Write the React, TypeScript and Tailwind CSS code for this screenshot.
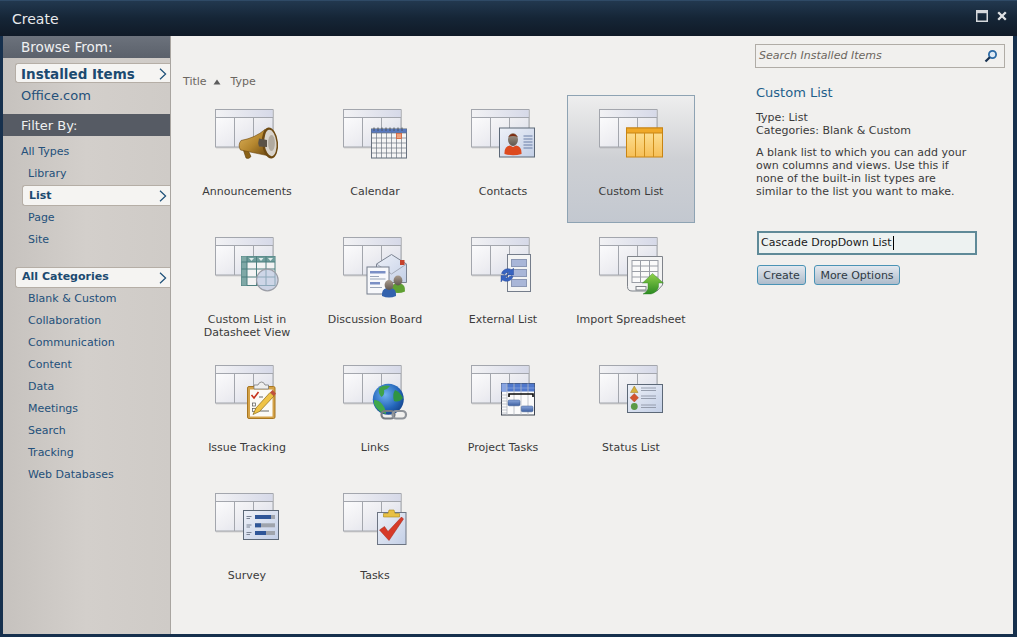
import React from "react";

const FONT = "font-['DejaVu_Sans',Verdana,sans-serif]";

function Table() {
  return (
    <g>
      <rect x="1" y="1" width="58" height="38.5" fill="#9a9a9a" opacity="0.35" />
      <rect x="0.5" y="0.5" width="57.5" height="37.5" fill="url(#tb)" stroke="#a3a6ad" strokeWidth="1" />
      <rect x="1" y="1" width="56.5" height="7.5" fill="url(#th)" />
      <line x1="0.5" y1="8.5" x2="58" y2="8.5" stroke="#a3a6ad" />
      <line x1="19.5" y1="8.5" x2="19.5" y2="38" stroke="#a3a6ad" />
      <line x1="38.5" y1="8.5" x2="38.5" y2="38" stroke="#a3a6ad" />
    </g>
  );
}

function Defs() {
  return (
    <svg width="0" height="0" className="absolute">
      <defs>
        <linearGradient id="tb" x1="0" y1="0" x2="1" y2="1">
          <stop offset="0" stopColor="#ffffff" />
          <stop offset="0.5" stopColor="#eeeef2" />
          <stop offset="1" stopColor="#d5d9e8" />
        </linearGradient>
        <linearGradient id="th" x1="0" y1="0" x2="1" y2="0">
          <stop offset="0" stopColor="#f2f2f4" />
          <stop offset="1" stopColor="#d6d9e8" />
        </linearGradient>
        <linearGradient id="brass" x1="0" y1="0" x2="1" y2="1">
          <stop offset="0" stopColor="#e0b45c" />
          <stop offset="0.55" stopColor="#b4862e" />
          <stop offset="1" stopColor="#6e4a12" />
        </linearGradient>
        <linearGradient id="orange" x1="0" y1="0" x2="0" y2="1">
          <stop offset="0" stopColor="#fde49a" />
          <stop offset="1" stopColor="#f7bf57" />
        </linearGradient>
        <linearGradient id="card" x1="0" y1="0" x2="1" y2="1">
          <stop offset="0" stopColor="#eef1f8" />
          <stop offset="1" stopColor="#c3cfe6" />
        </linearGradient>
        <radialGradient id="globe" cx="0.4" cy="0.35" r="0.75">
          <stop offset="0" stopColor="#6fb0ef" />
          <stop offset="0.6" stopColor="#2466bb" />
          <stop offset="1" stopColor="#123d80" />
        </radialGradient>
        <linearGradient id="green" x1="0" y1="0" x2="0" y2="1">
          <stop offset="0" stopColor="#8fd14a" />
          <stop offset="1" stopColor="#2c8a22" />
        </linearGradient>
        <linearGradient id="bluebar" x1="0" y1="0" x2="0" y2="1">
          <stop offset="0" stopColor="#8aa6dc" />
          <stop offset="1" stopColor="#3c5f9f" />
        </linearGradient>
        <linearGradient id="head" x1="0" y1="0" x2="0" y2="1">
          <stop offset="0" stopColor="#a89a8c" />
          <stop offset="1" stopColor="#5f574f" />
        </linearGradient>
      </defs>
    </svg>
  );
}

const Megaphone = () => (
  <g>
    <path d="M28 40 L32 39 L36 47.5 Q34 50.5 31 49 Z" fill="#8a6116" stroke="#5e400c" strokeWidth="0.6" />
    <path d="M26 31.5 Q22.5 36 25.5 41 L52 46.5 L50 20.5 Q40 29 26 31.5 Z" fill="url(#brass)" stroke="#6e4a12" strokeWidth="0.6" />
    <ellipse cx="55" cy="34" rx="8" ry="15.5" transform="rotate(-6 55 34)" fill="#6e4a12" />
    <ellipse cx="55.5" cy="34" rx="6" ry="13.2" transform="rotate(-6 55.5 34)" fill="#d9d4cc" />
    <ellipse cx="56.5" cy="34" rx="3.4" ry="8" fill="#b1aa9f" />
    <path d="M52 31 L44 29.5 Q42.5 33.5 44 37.5 L52 38 Z" fill="#5a5247" />
  </g>
);

const CalendarO = () => {
  const xs = [0, 1, 2, 3, 4, 5, 6, 7];
  const ys = [0, 1, 2, 3, 4];
  return (
    <g>
      <rect x="28.5" y="20" width="35" height="29" fill="#f5f5f5" stroke="#5c6877" strokeWidth="1" />
      <rect x="28.5" y="20" width="35" height="4" fill="#5878bd" />
      {xs.map((i) => (
        <line key={i} x1={28.5 + i * 5} y1="24" x2={28.5 + i * 5} y2="49" stroke="#6d7683" strokeWidth="0.7" />
      ))}
      {ys.map((i) => (
        <line key={i} x1="28.5" y1={24 + i * 5} x2="63.5" y2={24 + i * 5} stroke="#6d7683" strokeWidth="0.7" />
      ))}
      <rect x="53.5" y="24.5" width="5" height="5" fill="#f0a27c" stroke="#d9633a" strokeWidth="0.8" />
      {[31, 35, 39, 43, 47, 51, 55, 59].map((x) => (
        <line key={x} x1={x} y1="18.5" x2={x} y2="22" stroke="#4a5564" strokeWidth="1" />
      ))}
    </g>
  );
};

const ContactCard = () => (
  <g>
    <rect x="28.5" y="19" width="35" height="29" fill="url(#card)" stroke="#5c6877" />
    <path d="M33.5 45 Q33 37.5 39 36.5 L42 38 L45 36.5 Q51 37.5 50.5 45 Q42 47.5 33.5 45 Z" fill="#dd4a1f" />
    <ellipse cx="42" cy="30.5" rx="5" ry="6.5" fill="url(#head)" />
    <path d="M37 28 Q42 21.5 47 28 Q42 26 37 28 Z" fill="#7d2d12" />
    {[27, 30, 33, 36, 39].map((y) => (
      <line key={y} x1="52.5" y1={y} x2="61.5" y2={y} stroke="#6a7ea6" strokeWidth="1" />
    ))}
  </g>
);

const OrangeList = () => (
  <g>
    <rect x="27.5" y="19" width="36" height="29" fill="url(#orange)" stroke="#c88412" />
    <rect x="27.5" y="19" width="36" height="5" fill="#f0a928" stroke="#c88412" />
    {[36.5, 45.5, 54.5].map((x) => (
      <line key={x} x1={x} y1="24" x2={x} y2="48" stroke="#cf8f1c" />
    ))}
  </g>
);

const Datasheet = () => (
  <g>
    <rect x="26.5" y="19.5" width="33.5" height="29" fill="#f3f3f3" stroke="#4d7f7f" />
    <rect x="26.5" y="19.5" width="33.5" height="5.5" fill="#6f9d9c" />
    <rect x="26.5" y="19.5" width="5.5" height="29" fill="#7fa8a6" />
    {[32, 41.5, 51].map((x) => (
      <line key={x} x1={x} y1="19.5" x2={x} y2="48.5" stroke="#4d7f7f" />
    ))}
    {[25, 32, 40].map((y) => (
      <line key={y} x1="26.5" y1={y} x2="60" y2={y} stroke="#4d7f7f" />
    ))}
    {[36.5, 46, 55.5].map((x) => (
      <path key={x} d={`M${x - 2.5} 21 h5 l-2.5 3 Z`} fill="#dfeceb" />
    ))}
    <circle cx="52.3" cy="43" r="10.8" fill="#b7c4de" fillOpacity="0.62" stroke="#9c9ea6" strokeWidth="1.2" />
  </g>
);

const Person = ({ x, y, body }: { x: number; y: number; body: string }) => (
  <g>
    <path d={`M${x - 7} ${y + 11} Q${x - 7.5} ${y + 4} ${x - 2.5} ${y + 3} L${x + 2.5} ${y + 3} Q${x + 7.5} ${y + 4} ${x + 7} ${y + 11} Q${x} ${y + 14} ${x - 7} ${y + 11} Z`} fill={body} />
    <ellipse cx={x} cy={y} rx="4.4" ry="5" fill="url(#head)" />
  </g>
);

const Discussion = () => (
  <g>
    <path d="M33.5 27 L48.5 17.5 L63.5 27 V45.5 H33.5 Z" fill="url(#card)" stroke="#7a8290" />
    <path d="M33.5 27 L48.5 37 L63.5 27" fill="none" stroke="#a4aab8" />
    <rect x="57" y="23" width="4.5" height="5" fill="#c5412a" />
    <rect x="24" y="30" width="22" height="27" fill="#f7f8fb" stroke="#757d8b" />
    <rect x="27" y="34" width="15.5" height="2.5" fill="#7a8fc5" />
    <rect x="27" y="39" width="9" height="1" fill="#9aa5b8" />
    <rect x="27" y="41.5" width="15.5" height="1" fill="#9aa5b8" />
    <rect x="27" y="45" width="10" height="2.5" fill="#7a8fc5" />
    <rect x="27" y="50" width="12" height="1" fill="#9aa5b8" />
    <Person x={55} y={43.5} body="#5fa032" />
    <Person x={46} y={48} body="#3362ad" />
  </g>
);

const External = () => (
  <g>
    <rect x="36.5" y="17.5" width="23" height="37" fill="#f4f4f4" stroke="#757d8b" />
    {[22.5, 32.5, 42.5].map((y) => (
      <rect key={y} x="40.5" y={y} width="15" height="7" fill="#a9b6d8" stroke="#8b97b4" />
    ))}
    <path d="M30.5 36.5 A6.8 6.8 0 0 1 41 33 L42.5 31 V38 H35.5 L38 35.7 A3.4 3.4 0 0 0 33.8 37.5 Z" fill="#3763c0" stroke="#1f3f8f" strokeWidth="0.4" />
    <path d="M42 39.5 A6.8 6.8 0 0 1 31.5 43 L30 45 V38.5 H37 L34.5 40.8 A3.4 3.4 0 0 0 38.7 39 Z" fill="#3763c0" stroke="#1f3f8f" strokeWidth="0.4" />
  </g>
);

const ImportSheet = () => (
  <g>
    <path d="M28.5 19.5 H63.5 V48 L58 54 H33 Q28.5 54 28.5 49.5 Z" fill="#f3f3f3" stroke="#7f838a" />
    <rect x="33" y="23.5" width="26" height="22" fill="#fafafa" stroke="#9a9ea6" />
    {[41.5, 50.5].map((x) => (
      <line key={x} x1={x} y1="23.5" x2={x} y2="45.5" stroke="#9a9ea6" />
    ))}
    {[29, 34.5, 40].map((y) => (
      <line key={y} x1="33" y1={y} x2="59" y2={y} stroke="#9a9ea6" />
    ))}
    <rect x="37" y="49.5" width="10" height="3.5" fill="#fafafa" stroke="#7f838a" />
    <path d="M53.5 36.5 L64.5 46 H59.5 V50 Q58 55.5 52 57 H44 Q49.5 54.5 49 49 V46 H43.5 Z" fill="url(#green)" stroke="#2c7f20" strokeWidth="0.4" />
  </g>
);

const Clipboard = () => (
  <g>
    <rect x="32.5" y="21.5" width="27.5" height="32" rx="1.5" fill="#d4a248" stroke="#a87620" />
    <rect x="35" y="24.5" width="22.5" height="27" fill="#fbfaf6" />
    <path d="M39 22.5 V20 H43 Q44 17 46.5 17 Q49 17 50 20 H53.5 V24 H39 Z" fill="#eeeeee" stroke="#6c6c6c" strokeWidth="0.7" />
    <path d="M36.5 30 L39 33 L43.5 27" fill="none" stroke="#c5301a" strokeWidth="1.6" />
    <line x1="44" y1="32" x2="48" y2="32" stroke="#444" strokeWidth="0.8" />
    <rect x="37.5" y="38" width="3" height="3" fill="none" stroke="#555" strokeWidth="0.7" />
    <rect x="37.5" y="43.5" width="3" height="3" fill="none" stroke="#555" strokeWidth="0.7" />
    <line x1="44" y1="46" x2="54" y2="46" stroke="#444" strokeWidth="0.8" />
    <path d="M38 49.5 L41 43 L55 27.5 L59 31 L44.5 46.5 Z" fill="#efc346" stroke="#8a6a16" strokeWidth="0.7" />
    <path d="M55 27.5 L57.5 25 L61 28.5 L59 31 Z" fill="#c0503c" />
  </g>
);

const Globe = () => (
  <g>
    <circle cx="45.3" cy="34.3" r="15.5" fill="url(#globe)" />
    <path d="M36 23 Q41 19.5 47 21 Q45 24 41 25 Q42 30 38.5 32 Q35 29 36 23 Z" fill="#3fa24a" />
    <path d="M31 35 Q36 35 39 39 Q43 44 43 49 Q35 47 31 39 Z" fill="#41a84c" />
    <path d="M52 25 Q57 27 60 33 Q56 38 51 36 Q49 30 52 25 Z" fill="#2f9444" />
    <rect x="38.5" y="46" width="13" height="7.5" rx="3.7" fill="none" stroke="#767b82" strokeWidth="2.2" />
    <rect x="49.5" y="46" width="13.5" height="7.5" rx="3.7" fill="none" stroke="#8f949a" strokeWidth="2.2" />
  </g>
);

const Gantt = () => (
  <g>
    <rect x="30.5" y="18.5" width="33" height="31.5" fill="#fbfbfb" stroke="#3f4652" />
    <rect x="30.5" y="18.5" width="33" height="8" fill="#5078cc" />
    <rect x="30.5" y="18.5" width="5.5" height="8" fill="#88a4e2" />
    <line x1="36" y1="23" x2="63.5" y2="23" stroke="#7b9ade" />
    {[36, 43, 50, 57].map((x) => (
      <line key={x} x1={x} y1="18.5" x2={x} y2="50" stroke="#b6bac2" strokeWidth="0.8" />
    ))}
    {[30, 33, 36, 39, 42, 45, 48].map((y) => (
      <line key={y} x1="30.5" y1={y} x2="36" y2={y} stroke="#aeb3bc" strokeWidth="0.7" />
    ))}
    <path d="M38 32 V29 H62 V32" fill="none" stroke="#0a0a0a" strokeWidth="1.6" />
    <rect x="37" y="35" width="12" height="5.8" rx="1.4" fill="url(#bluebar)" stroke="#38588f" strokeWidth="0.5" />
    <rect x="50.3" y="41" width="11.7" height="5.8" rx="1.4" fill="url(#bluebar)" stroke="#38588f" strokeWidth="0.5" />
  </g>
);

const Status = () => (
  <g>
    <rect x="28.5" y="19.5" width="35" height="28" fill="url(#card)" stroke="#5c6877" />
    <path d="M35.3 21 L39 27.5 H31.5 Z" fill="#d6b03a" stroke="#9a7b1c" strokeWidth="0.5" />
    <path d="M35.3 28.5 L39.5 32.7 L35.3 37 L31 32.7 Z" fill="#d2532f" stroke="#a33a1c" strokeWidth="0.4" />
    <circle cx="35.3" cy="41.5" r="3.4" fill="#5a9a46" />
    {[23, 25.5, 31, 33.5, 40, 42.5].map((y) => (
      <line key={y} x1="42" y1={y} x2="57" y2={y} stroke="#8f96a6" strokeWidth="0.9" />
    ))}
  </g>
);

const SurveyIcon = () => (
  <g>
    <rect x="28.5" y="17.5" width="35" height="29" fill="url(#card)" stroke="#5c6877" />
    {[23.5, 32, 39.5].map((y) => (
      <g key={y}>
        <line x1="31.5" y1={y} x2="36.5" y2={y} stroke="#7b8494" />
        <line x1="31.5" y1={y + 2} x2="35" y2={y + 2} stroke="#7b8494" />
      </g>
    ))}
    <rect x="40" y="22" width="20" height="4" fill="#9fa4ac" />
    <rect x="40" y="22" width="16" height="4" fill="#2f5698" />
    <rect x="40" y="30.3" width="20" height="4" fill="#9fa4ac" />
    <rect x="40" y="30.3" width="6" height="4" fill="#2f5698" />
    <rect x="40" y="38" width="20" height="4" fill="#9fa4ac" />
    <rect x="40" y="38" width="11" height="4" fill="#2f5698" />
  </g>
);

const TasksIcon = () => (
  <g>
    <rect x="34.5" y="19.5" width="28.5" height="32" fill="url(#card)" stroke="#6c7482" />
    <path d="M40.5 24 V20.5 H45 L46 17 H51 L52 20.5 H56.5 V24 Z" fill="#e8c044" stroke="#a88618" strokeWidth="0.6" />
    <path d="M36.5 37 L41.5 33.5 L45 38.5 L58.5 24 L60.5 26 L46 47.5 Z" fill="#d63a28" stroke="#a02416" strokeWidth="0.5" />
  </g>
);

const ITEMS: { t: string[]; icon: React.ReactNode; sel?: boolean }[] = [
  { t: ["Announcements"], icon: <Megaphone /> },
  { t: ["Calendar"], icon: <CalendarO /> },
  { t: ["Contacts"], icon: <ContactCard /> },
  { t: ["Custom List"], icon: <OrangeList />, sel: true },
  { t: ["Custom List in", "Datasheet View"], icon: <Datasheet /> },
  { t: ["Discussion Board"], icon: <Discussion /> },
  { t: ["External List"], icon: <External /> },
  { t: ["Import Spreadsheet"], icon: <ImportSheet /> },
  { t: ["Issue Tracking"], icon: <Clipboard /> },
  { t: ["Links"], icon: <Globe /> },
  { t: ["Project Tasks"], icon: <Gantt /> },
  { t: ["Status List"], icon: <Status /> },
  { t: ["Survey"], icon: <SurveyIcon /> },
  { t: ["Tasks"], icon: <TasksIcon /> },
];

function Tile({ t, icon, sel }: { t: string[]; icon: React.ReactNode; sel?: boolean }) {
  return (
    <div
      className={
        "flex h-[128px] flex-col items-center border pt-[13px] " +
        (sel
          ? "border-[#8ea3b3] bg-gradient-to-b from-[#eeeeee] via-[#ced0d4] to-[#c3c8d0]"
          : "border-transparent")
      }
    >
      <svg width="70" height="64" viewBox="0 0 70 64" className="ml-[6px] shrink-0">
        <Table />
        {icon}
      </svg>
      <div className="mt-[12px] text-center text-[11px] leading-[13px] text-[#3b3b3b]">
        {t.map((l) => (
          <div key={l}>{l}</div>
        ))}
      </div>
    </div>
  );
}

const Chevron = () => (
  <svg width="8" height="12" viewBox="0 0 8 12" className="shrink-0">
    <path d="M1 0.8 L6.6 6 L1 11.2" fill="none" stroke="#1c4f78" strokeWidth="1.2" />
  </svg>
);

function Pill({ label, indent, h, size }: { label: string; indent: string; h: string; size: string }) {
  return (
    <div className={`flex items-center justify-between rounded-l-[3px] border-y border-l border-[#b5aea6] bg-[#f5f4f2] pr-[3px] ${indent} ${h} ${size}`}>
      <span className="font-bold text-[#1c4a70]">{label}</span>
      <Chevron />
    </div>
  );
}

const SideLink = ({ children, cls }: { children: React.ReactNode; cls: string }) => (
  <div className={`flex h-[22px] items-center text-[11px] text-[#24507a] ${cls}`}>{children}</div>
);

export default function App() {
  return (
    <div className={`flex h-[637px] w-[1017px] flex-col overflow-hidden bg-[#16304d] pb-[3px] pl-[3px] pr-[4px] ${FONT}`}>
      <Defs />
      <div className="-ml-[3px] -mr-[4px] flex h-[36px] shrink-0 items-center justify-between border-t border-[#2f4a66] bg-gradient-to-b from-[#22384f] via-[#152536] to-[#101a27] pl-[12px] pr-[10px]">
        <span className="pt-[2px] text-[14px] text-[#e8eaec]">Create</span>
        <div className="mb-[6px] flex items-center gap-[9px]">
          <svg width="12" height="12" viewBox="0 0 12 12">
            <rect x="0.75" y="0.75" width="10.5" height="10.5" fill="none" stroke="#d5d8dc" strokeWidth="1.5" />
            <rect x="1" y="1" width="10" height="2.2" fill="#d5d8dc" />
          </svg>
          <svg width="10" height="10" viewBox="0 0 10 10">
            <path d="M1.2 1.2 L8.8 8.8 M8.8 1.2 L1.2 8.8" stroke="#e0e2e5" strokeWidth="2.3" />
          </svg>
        </div>
      </div>
      <div className="flex min-h-0 flex-1">
        <aside className="w-[168px] shrink-0 border-r border-[#a9a5a0] bg-gradient-to-r from-[#c6c2be] via-[#d3cfcb] to-[#cfcbc7]">
          <div className="flex h-[22px] items-center bg-gradient-to-b from-[#6c727c] to-[#5b616b] pl-[18px] text-[13.5px] text-[#eff0f1]">Browse From:</div>
          <div className="mt-[5px] pl-[12px]">
            <Pill label="Installed Items" indent="pl-[5px] pt-[2px]" h="h-[20px]" size="text-[13.5px]" />
          </div>
          <div className="flex h-[24px] items-center pl-[18px] pt-[2px] text-[13px] text-[#24507a]">Office.com</div>
          <div className="mt-[7px] flex h-[22px] items-center bg-[#565b64] pl-[18px] pt-[2px] text-[13px] text-[#eff0f1]">Filter By:</div>
          <div className="mt-[4px]">
            <SideLink cls="pl-[18px] pt-[2px]">All Types</SideLink>
            <SideLink cls="pl-[25px] pt-[2px]">Library</SideLink>
            <div className="mt-[1px] pl-[19px]">
              <Pill label="List" indent="pl-[6px] pt-[1px]" h="h-[21px]" size="text-[11px]" />
            </div>
            <SideLink cls="pl-[25px] pt-[2px]">Page</SideLink>
            <SideLink cls="pl-[25px] pt-[2px]">Site</SideLink>
          </div>
          <div className="mt-[17px] pl-[12px]">
            <Pill label="All Categories" indent="pl-[6px]" h="h-[21px]" size="text-[11px]" />
          </div>
          <div>
            {["Blank & Custom", "Collaboration", "Communication", "Content", "Data", "Meetings", "Search", "Tracking", "Web Databases"].map((c) => (
              <SideLink key={c} cls="pl-[25px]">{c}</SideLink>
            ))}
          </div>
        </aside>
        <main className="flex min-w-0 flex-1 bg-[#f1f0ee]">
          <div className="w-[524px] shrink-0 pl-[12px]">
            <div className="flex h-[59px] items-end gap-[6px] pb-[5px] text-[11px] text-[#6b6660]">
              <span>Title</span>
              <svg width="8" height="6" viewBox="0 0 8 6" className="mb-[5px]">
                <path d="M0.5 5.5 L4 0.5 L7.5 5.5 Z" fill="#5c5c5c" />
              </svg>
              <span className="ml-[4px]">Type</span>
            </div>
            <div className="grid w-[512px] grid-cols-4">
              {ITEMS.map((i) => (
                <Tile key={i.t.join()} {...i} />
              ))}
            </div>
          </div>
          <div className="flex-1 pl-[60px] pr-[8px] pt-[8px]">
            <div className="flex h-[24px] items-center justify-between border border-[#b0aca6] pl-[3px] pr-[6px]">
              <span className="text-[11px] italic text-[#6b6660]">Search Installed Items</span>
              <svg width="14" height="14" viewBox="0 0 14 14">
                <circle cx="8.5" cy="5.5" r="3.6" fill="#dfeaf5" stroke="#2c6aa5" strokeWidth="1.8" />
                <line x1="5.8" y1="8.2" x2="1.5" y2="12.5" stroke="#17304f" strokeWidth="2.2" />
              </svg>
            </div>
            <div className="mt-[17px] pl-[1px] text-[13px] leading-[16px] text-[#1f5f8b]">Custom List</div>
            <div className="mt-[10px] pl-[1px] text-[11px] leading-[13px] text-[#3b3b3b]">
              <div>Type: List</div>
              <div>Categories: Blank &amp; Custom</div>
            </div>
            <div className="mt-[9px] w-[220px] pl-[1px] text-[11px] leading-[13px] text-[#3b3b3b]">
              A blank list to which you can add your own columns and views. Use this if none of the built-in list types are similar to the list you want to make.
            </div>
            <div className="ml-[2px] mt-[33px] flex h-[24px] w-[220px] items-center border-2 border-[#5f8a98] bg-[#edf2f1] pl-[2px] text-[11px] text-[#1a1a1a]">
              Cascade DropDown List<span className="ml-[1px] h-[14px] w-px bg-black" />
            </div>
            <div className="ml-[2px] mt-[10px] flex gap-[8px]">
              <div className="flex h-[20px] w-[49px] items-center justify-center rounded-[3px] border border-[#4a93b5] bg-gradient-to-b from-[#e3e8ee] to-[#aebccb] pt-[2px] text-[11px] text-[#2f3a44]">Create</div>
              <div className="flex h-[20px] w-[86px] items-center justify-center rounded-[3px] border border-[#4a93b5] bg-gradient-to-b from-[#e3e8ee] to-[#aebccb] pt-[2px] text-[11px] text-[#2f3a44]">More Options</div>
            </div>
          </div>
        </main>
      </div>
    </div>
  );
}
